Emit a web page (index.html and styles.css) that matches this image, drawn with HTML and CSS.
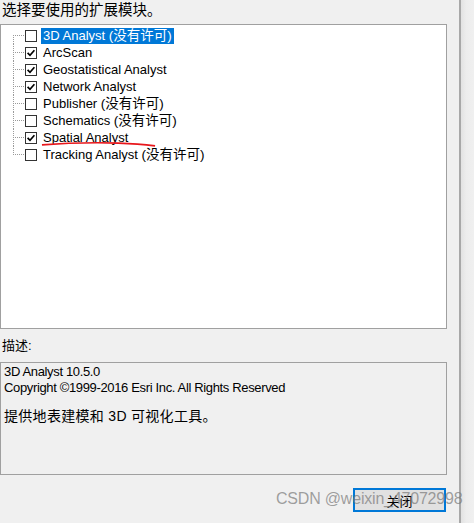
FILE: index.html
```html
<!DOCTYPE html>
<html>
<head>
<meta charset="utf-8">
<link rel="stylesheet" href="styles.css">
</head>
<body>
<div class="window">
  <div class="main">
    <div class="title">选择要使用的扩展模块。</div>
    <div class="list">
      <div class="row"><svg class="cb" viewBox="0 0 12 12"><rect x="0.5" y="0.5" width="11" height="11"/></svg><span class="label sel">3D Analyst <span class="cjk">(没有许可)</span></span></div>
      <div class="row"><svg class="cb" viewBox="0 0 12 12"><rect x="0.5" y="0.5" width="11" height="11"/><path class="ck" d="M2.6 5.8 L5 8.3 L9.4 3.3"/></svg><span class="label">ArcScan</span></div>
      <div class="row"><svg class="cb" viewBox="0 0 12 12"><rect x="0.5" y="0.5" width="11" height="11"/><path class="ck" d="M2.6 5.8 L5 8.3 L9.4 3.3"/></svg><span class="label">Geostatistical Analyst</span></div>
      <div class="row"><svg class="cb" viewBox="0 0 12 12"><rect x="0.5" y="0.5" width="11" height="11"/><path class="ck" d="M2.6 5.8 L5 8.3 L9.4 3.3"/></svg><span class="label">Network Analyst</span></div>
      <div class="row"><svg class="cb" viewBox="0 0 12 12"><rect x="0.5" y="0.5" width="11" height="11"/></svg><span class="label">Publisher <span class="cjk">(没有许可)</span></span></div>
      <div class="row"><svg class="cb" viewBox="0 0 12 12"><rect x="0.5" y="0.5" width="11" height="11"/></svg><span class="label">Schematics <span class="cjk">(没有许可)</span></span></div>
      <div class="row"><svg class="cb" viewBox="0 0 12 12"><rect x="0.5" y="0.5" width="11" height="11"/><path class="ck" d="M2.6 5.8 L5 8.3 L9.4 3.3"/></svg><span class="label">Spatial Analyst</span><svg class="scribble" viewBox="0 0 120 8"><path d="M1 5 C 20 3.4, 50 2.2, 80 3 C 95 3.4, 108 4.6, 118 6"/></svg></div>
      <div class="row"><svg class="cb" viewBox="0 0 12 12"><rect x="0.5" y="0.5" width="11" height="11"/></svg><span class="label">Tracking Analyst <span class="cjk">(没有许可)</span></span></div>
    </div>
    <div class="desc-label">描述:</div>
    <div class="desc">
      <div class="line">3D Analyst 10.5.0</div>
      <div class="line">Copyright ©1999-2016 Esri Inc. All Rights Reserved</div>
      <div class="line cn">提供地表建模和 3D 可视化工具。</div>
    </div>
    <div class="footer"><button class="btn">关闭</button></div>
  </div>
  <div class="edge"></div>
</div>
<div class="watermark">CSDN @weixin_47072998</div>
</body>
</html>
```

FILE: styles.css
```css
html, body {
  margin: 0;
  padding: 0;
  background: #f0f0f0;
  width: 474px;
  height: 523px;
  overflow: hidden;
  font-family: "Liberation Sans", "Noto Sans CJK SC", sans-serif;
  font-size: 13px;
  color: #000;
}
.window {
  display: flex;
  height: 523px;
  position: relative;
}
.main {
  width: 447px;
  padding-right: 12px;
  display: flex;
  flex-direction: column;
}
.title {
  height: 24px;
  font-size: 14.5px;
  line-height: 20px;
  padding-left: 2px;
}
.list {
  border: 1px solid #a0a0a0;
  background: #fff;
  padding-top: 2px;
  box-sizing: border-box;
  height: 305px;
}
.row {
  position: relative;
  height: 17px;
  display: flex;
  align-items: center;
  padding-left: 24px;
}
.row::before {
  content: "";
  position: absolute;
  left: 12px;
  width: 11px;
  top: 8px;
  border-top: 1px dotted #9a9a9a;
}
.row::after {
  content: "";
  position: absolute;
  left: 12px;
  top: 0;
  bottom: 0;
  border-left: 1px dotted #9a9a9a;
}
.row:first-child::after { top: 8px; }
.row:last-child::after { bottom: 8px; }
.cb {
  width: 12px;
  height: 12px;
  flex: none;
}
.cb rect {
  fill: #fff;
  stroke: #333;
  stroke-width: 1;
}
.cb .ck {
  fill: none;
  stroke: #000;
  stroke-width: 1.7;
}
.label {
  margin-left: 4px;
  padding: 0 2px;
  line-height: 16px;
  height: 16px;
  white-space: nowrap;
}
.label .cjk {
  font-size: 13.5px;
}
.label.sel {
  background: #0078d7;
  color: #fff;
}
.scribble {
  position: absolute;
  left: 40px;
  top: 11px;
  width: 116px;
  height: 8px;
  overflow: visible;
}
.scribble path {
  fill: none;
  stroke: #e8161b;
  stroke-width: 1.8;
}
.desc-label {
  height: 33px;
  line-height: 34px;
  padding-left: 2px;
}
.desc {
  height: 113px;
  box-sizing: border-box;
  border: 1px solid #a0a0a0;
  padding: 1px 3px;
  background: #f0f0f0;
}
.line {
  line-height: 16px;
  letter-spacing: -0.35px;
}
.line.cn {
  margin-top: 12px;
  font-size: 14px;
  letter-spacing: 0.3px;
}
.footer {
  display: flex;
  justify-content: flex-end;
  padding-top: 13px;
  padding-right: 1px;
}
.btn {
  width: 93px;
  height: 24px;
  background: #e1e1e1;
  border: 1px solid #0078d7;
  box-shadow: inset 0 0 0 1px #0078d7;
  font-family: "Liberation Sans", "Noto Sans CJK SC", sans-serif;
  font-size: 13px;
  padding: 0;
  color: #000;
}
.edge {
  flex: 1;
  border-left: 2px solid #a8a8a8;
  background: linear-gradient(to right, #e2e2e2, #ededed 40%, #f0f0f0);
}
.watermark {
  position: absolute;
  left: 276px;
  top: 490px;
  font-family: "Liberation Sans", sans-serif;
  font-size: 16px;
  letter-spacing: -0.2px;
  color: rgba(120, 120, 120, 0.7);
  white-space: nowrap;
  pointer-events: none;
}
```
